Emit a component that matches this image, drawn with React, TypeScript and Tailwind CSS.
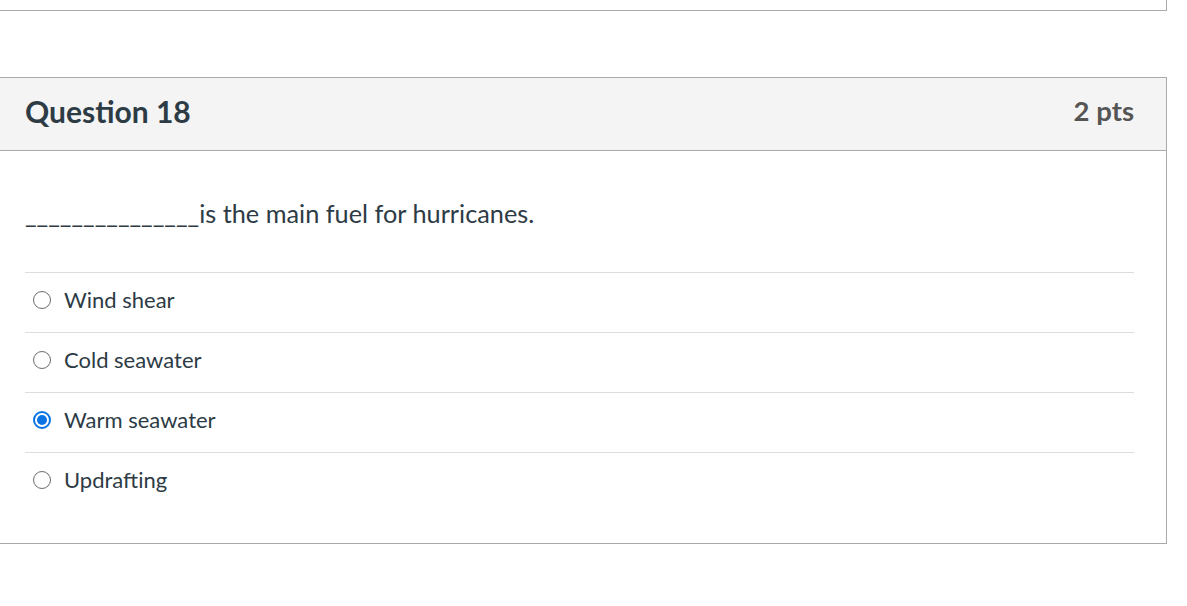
import React from "react";

const answers = [
  { label: "Wind shear", checked: false },
  { label: "Cold seawater", checked: false },
  { label: "Warm seawater", checked: true },
  { label: "Updrafting", checked: false },
];

function Radio({ checked }: { checked: boolean }) {
  if (checked) {
    return (
      <span className="flex h-[18px] w-[18px] items-center justify-center rounded-full border-2 border-[#0b74e5] bg-white">
        <span className="h-[10px] w-[10px] rounded-full bg-[#0b74e5]" />
      </span>
    );
  }
  return <span className="h-[18px] w-[18px] rounded-full border-[1.5px] border-[#6b6b6b] bg-white" />;
}

export default function App() {
  return (
    <div className="min-h-[606px] bg-white" style={{ fontFamily: "Lato, 'Open Sans', sans-serif" }}>
      <div className="h-[11px] w-[1167px] border-r border-b border-[#aaaaaa]" />
      <div className="mt-[66px] w-[1167px] border-t border-r border-b border-[#aaaaaa]">
        <div className="flex h-[73px] items-center justify-between border-b border-[#aaaaaa] bg-[#f4f4f4] pb-[6px] pl-[25px] pr-[32px]">
          <h2 className="text-[30px] leading-[36px] font-bold text-[#2d3b45]">Question 18</h2>
          <span className="text-[27.5px] leading-[36px] font-bold text-[#555555]">2 pts</span>
        </div>
        <div className="px-[25px] pt-[47px] pb-[31px] pr-[32px] text-[#2d3b45]">
          <p className="text-[25.3px] leading-[30px]">_______________is the main fuel for hurricanes.</p>
          <div className="mt-[44px]">
            {answers.map((a) => (
              <div key={a.label} className="flex h-[60px] items-center gap-[13px] border-t border-[#dddddd] pb-[6px] pl-[8px]">
                <Radio checked={a.checked} />
                <span className="text-[22px]">{a.label}</span>
              </div>
            ))}
          </div>
        </div>
      </div>
    </div>
  );
}
